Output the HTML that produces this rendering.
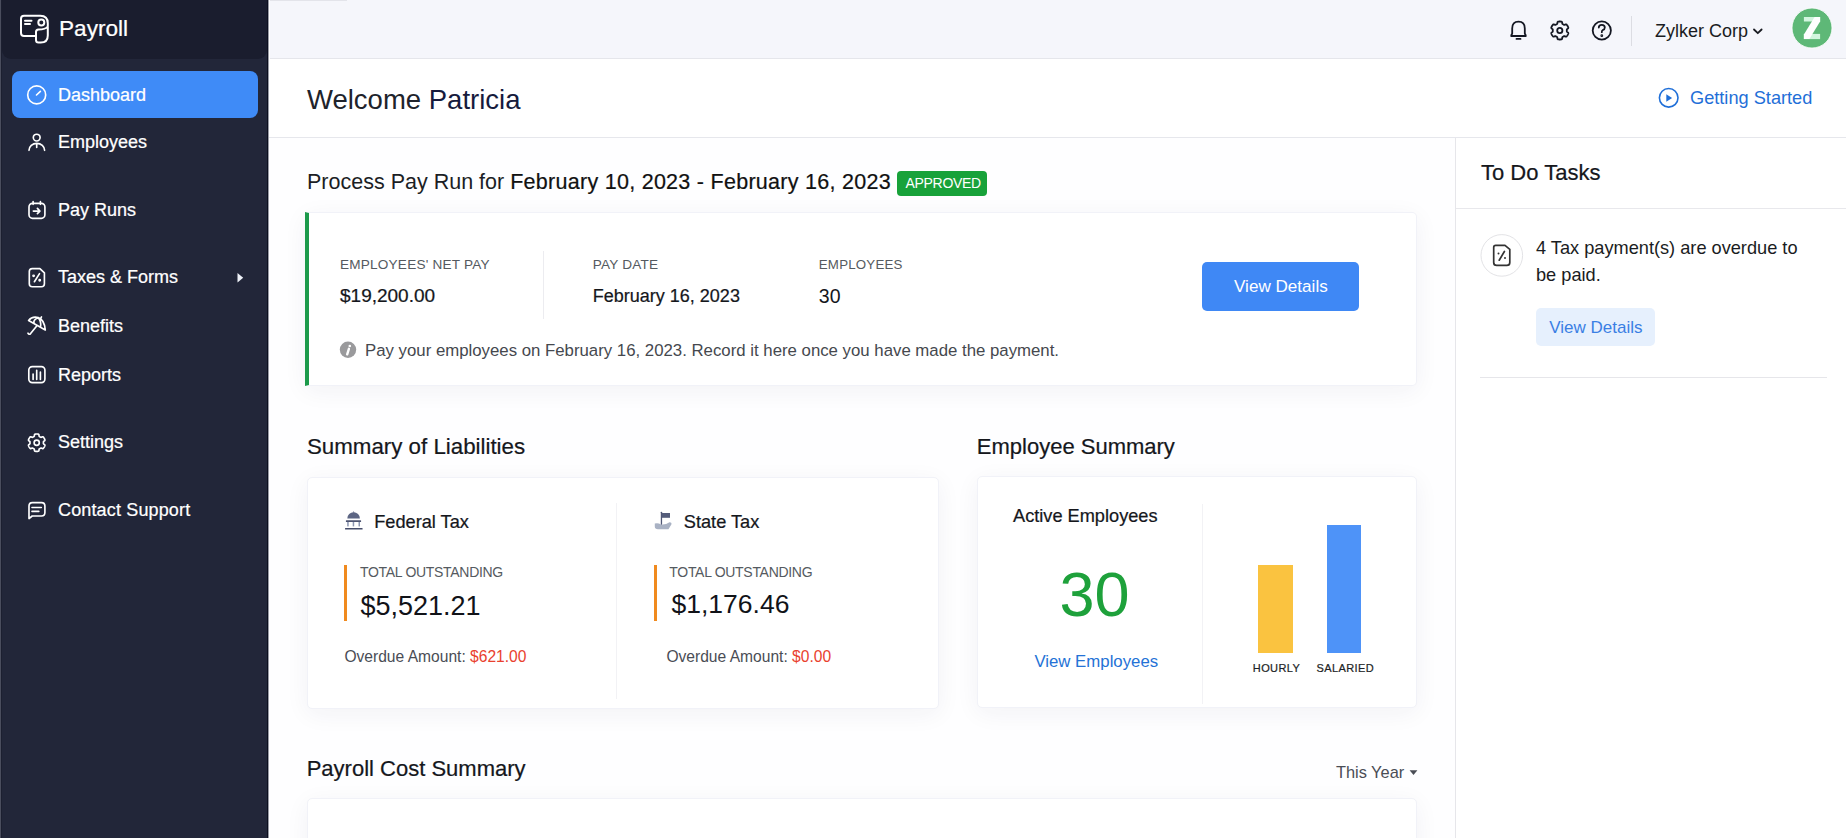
<!DOCTYPE html>
<html><head><meta charset="utf-8"><title>Payroll Dashboard</title>
<style>
*{box-sizing:border-box;margin:0;padding:0}
html,body{width:1846px;height:838px;overflow:hidden;background:#fff;font-family:"Liberation Sans",sans-serif;color:#21232b}
.abs{position:absolute}
.ic{position:absolute;overflow:visible}
.t{position:absolute;white-space:nowrap;line-height:1}
.med{-webkit-text-stroke:0.22px currentColor}
#sb{position:absolute;left:0;top:0;width:268px;height:838px;background:#222639;border-right:1px solid #0c0f1f}
#sbline{position:absolute;left:268px;top:0;width:1px;height:838px;background:#9a9ca6}
#sb .edge{position:absolute;left:0;top:0;width:2px;height:838px;background:#1c1f30;border-left:1px solid #4a4d5d}
#logo{position:absolute;left:2px;top:0;width:265px;height:58.5px;background:#1a1d2e;border-radius:0 0 9px 9px}
.nav{position:absolute;left:12px;width:246px;height:47px;border-radius:8px}
.nav.act{background:#3f8bf7}
#hdr{position:absolute;left:270px;top:0;width:1576px;height:59px;background:#f5f6fb;border-bottom:1px solid #e5e6eb}
#topbar{position:absolute;left:270px;top:0;width:77px;height:1px;background:#e3e4ea}
#welc{position:absolute;left:269px;top:59px;width:1577px;height:79px;background:#fff;border-bottom:1px solid #e6e7ec}
#main{position:absolute;left:269px;top:138px;width:1186px;height:700px;background:#fefeff}
#right{position:absolute;left:1455px;top:138px;width:391px;height:700px;background:#fff;border-left:1px solid #e6e6ea}
.card{position:absolute;background:#fff;border-radius:5px;box-shadow:0 5px 24px rgba(30,35,70,0.055);border:1px solid #f1f2f8}
</style></head><body>
<div id="sb"><div class="edge"></div><div id="logo"></div><div class="nav act" style="top:71px"></div></div><div id="sbline"></div><svg class="ic" style="left:14px;top:8px" width="42" height="42" viewBox="0 0 42 42" fill="none" stroke="#fff" stroke-width="2" stroke-linecap="round" stroke-linejoin="round">
<path d="M22 28 H10 Q7 28 7 25 V10.8 Q7 7.8 10 7.8 H26.3 Q33.8 7.8 33.8 15.3 V27.6 Q33.8 34.6 26.8 34.6 H24.5 Q22 34.6 22 32.1 V24 Q22 21.5 24.5 21.5 Q31.5 21.5 33.8 18.5"/>
<circle cx="27.3" cy="14.5" r="3"/><path d="M11 12.8 H17.5 M11 16 H16"/></svg>
<div class="t med" style="left:59px;top:18.07px;font-size:22.6px;color:white;letter-spacing:0px">Payroll</div>
<div class="t med" style="left:58px;top:86.16px;font-size:18px;color:white;">Dashboard</div>
<div class="t med" style="left:58px;top:133.16px;font-size:18px;color:white;">Employees</div>
<div class="t med" style="left:58px;top:201.16px;font-size:18px;color:white;">Pay Runs</div>
<div class="t med" style="left:58px;top:268.16px;font-size:18px;color:white;">Taxes &amp; Forms</div>
<div class="t med" style="left:58px;top:317.16px;font-size:18px;color:white;">Benefits</div>
<div class="t med" style="left:58px;top:365.66px;font-size:18px;color:white;">Reports</div>
<div class="t med" style="left:58px;top:432.86px;font-size:18px;color:white;">Settings</div>
<div class="t med" style="left:58px;top:501.06px;font-size:18px;color:white;letter-spacing:0.15px">Contact Support</div>
<svg class="ic" style="left:22px;top:80px" width="30" height="30" viewBox="0 0 30 30" fill="none" stroke="#fff" stroke-width="1.65" stroke-linecap="round" stroke-linejoin="round"><circle cx="14.7" cy="14.9" r="9"/><path d="M14.5 15 L18.4 11.3"/></svg>
<svg class="ic" style="left:22px;top:127px" width="30" height="30" viewBox="0 0 30 30" fill="none" stroke="#fff" stroke-width="1.65" stroke-linecap="round" stroke-linejoin="round"><circle cx="14.7" cy="10.6" r="3.4"/><path d="M7 23.3 A7.8 7 0 0 1 22.6 23.3 M14.7 16.8 V20.4"/></svg>
<svg class="ic" style="left:22px;top:195px" width="30" height="30" viewBox="0 0 30 30" fill="none" stroke="#fff" stroke-width="1.65" stroke-linecap="round" stroke-linejoin="round"><rect x="7" y="8.4" width="15.9" height="14.9" rx="3.5"/><path d="M11.1 6.6 V9.3 M18.4 6.6 V9.3 M11.3 16.1 H17.9 M15.4 13.4 L17.9 16.1 L15.4 18.6"/></svg>
<svg class="ic" style="left:22px;top:262px" width="30" height="30" viewBox="0 0 30 30" fill="none" stroke="#fff" stroke-width="1.65" stroke-linecap="round" stroke-linejoin="round"><path d="M10.3 6.6 H17.9 L22.4 10.9 V21.7 Q22.4 24.7 19.4 24.7 H10.3 Q7.3 24.7 7.3 21.7 V9.6 Q7.3 6.6 10.3 6.6 Z M12.4 19.7 L17.5 11.6"/><circle cx="11.6" cy="13.8" r="0.6" fill="#fff"/><circle cx="17.7" cy="18.3" r="0.6" fill="#fff"/></svg>
<svg class="ic" style="left:22px;top:311px" width="30" height="30" viewBox="0 0 30 30" fill="none" stroke="#fff" stroke-width="1.65" stroke-linecap="round" stroke-linejoin="round"><path d="M6.6 9.5 Q10 5 16.3 6.6 Q22.5 8.8 23.3 19 Z M16.3 6.8 Q11.5 8.5 11.8 12 M16.3 6.8 Q19.5 11 18.6 15.8 M19.5 5.9 L18.7 7.4 M14.7 15 L8.6 22.6 Q7.2 24 6 22.2"/></svg>
<svg class="ic" style="left:22px;top:360px" width="30" height="30" viewBox="0 0 30 30" fill="none" stroke="#fff" stroke-width="1.65" stroke-linecap="round" stroke-linejoin="round"><rect x="6.8" y="6.6" width="16.1" height="16" rx="3.5"/><path d="M11.1 14.1 V19.5 M14.7 10.2 V19.5 M18.4 12 V19.5"/></svg>
<svg class="ic" style="left:22px;top:428px" width="30" height="30" viewBox="0 0 30 30" fill="none" stroke="#fff" stroke-width="1.65" stroke-linecap="round" stroke-linejoin="round"><path d="M14.70 6.00 L15.00 6.01 L15.31 6.02 L15.61 6.05 L15.91 6.09 L16.21 6.14 L16.50 6.23 L16.77 6.41 L16.95 6.85 L17.02 7.57 L17.09 8.13 L17.25 8.39 L17.44 8.54 L17.65 8.66 L17.85 8.77 L18.06 8.89 L18.26 9.01 L18.46 9.13 L18.66 9.25 L18.89 9.34 L19.20 9.34 L19.72 9.13 L20.37 8.82 L20.85 8.76 L21.14 8.90 L21.36 9.11 L21.55 9.35 L21.74 9.59 L21.91 9.84 L22.08 10.09 L22.23 10.35 L22.38 10.62 L22.52 10.89 L22.65 11.16 L22.76 11.44 L22.87 11.73 L22.94 12.02 L22.91 12.34 L22.63 12.72 L22.03 13.14 L21.59 13.49 L21.43 13.75 L21.40 14.00 L21.40 14.23 L21.41 14.47 L21.41 14.70 L21.41 14.93 L21.40 15.17 L21.40 15.40 L21.43 15.65 L21.59 15.91 L22.03 16.26 L22.63 16.68 L22.91 17.06 L22.94 17.38 L22.87 17.67 L22.76 17.96 L22.65 18.24 L22.52 18.51 L22.38 18.78 L22.23 19.05 L22.08 19.31 L21.91 19.56 L21.74 19.81 L21.55 20.05 L21.36 20.29 L21.14 20.50 L20.85 20.64 L20.37 20.58 L19.72 20.27 L19.20 20.06 L18.89 20.06 L18.66 20.15 L18.46 20.27 L18.26 20.39 L18.06 20.51 L17.85 20.63 L17.65 20.74 L17.44 20.86 L17.25 21.01 L17.09 21.27 L17.02 21.83 L16.95 22.55 L16.77 22.99 L16.50 23.17 L16.21 23.26 L15.91 23.31 L15.61 23.35 L15.31 23.38 L15.00 23.39 L14.70 23.40 L14.40 23.39 L14.09 23.38 L13.79 23.35 L13.49 23.31 L13.19 23.26 L12.90 23.17 L12.63 22.99 L12.45 22.55 L12.38 21.83 L12.31 21.27 L12.15 21.01 L11.96 20.86 L11.75 20.74 L11.55 20.63 L11.34 20.51 L11.14 20.39 L10.94 20.27 L10.74 20.15 L10.51 20.06 L10.20 20.06 L9.68 20.27 L9.03 20.58 L8.55 20.64 L8.26 20.50 L8.04 20.29 L7.85 20.05 L7.66 19.81 L7.49 19.56 L7.32 19.31 L7.17 19.05 L7.02 18.78 L6.88 18.51 L6.75 18.24 L6.64 17.96 L6.53 17.67 L6.46 17.38 L6.49 17.06 L6.77 16.68 L7.37 16.26 L7.81 15.91 L7.97 15.65 L8.00 15.40 L8.00 15.17 L7.99 14.93 L7.99 14.70 L7.99 14.47 L8.00 14.23 L8.00 14.00 L7.97 13.75 L7.81 13.49 L7.37 13.14 L6.77 12.72 L6.49 12.34 L6.46 12.02 L6.53 11.73 L6.64 11.44 L6.75 11.16 L6.88 10.89 L7.02 10.62 L7.17 10.35 L7.32 10.09 L7.49 9.84 L7.66 9.59 L7.85 9.35 L8.04 9.11 L8.26 8.90 L8.55 8.76 L9.03 8.82 L9.68 9.13 L10.20 9.34 L10.51 9.34 L10.74 9.25 L10.94 9.13 L11.14 9.01 L11.34 8.89 L11.55 8.77 L11.75 8.66 L11.96 8.54 L12.15 8.39 L12.31 8.13 L12.38 7.57 L12.45 6.85 L12.63 6.41 L12.90 6.23 L13.19 6.14 L13.49 6.09 L13.79 6.05 L14.09 6.02 L14.40 6.01 Z"/><circle cx="14.7" cy="14.7" r="2.6"/></svg>
<svg class="ic" style="left:22px;top:496px" width="30" height="30" viewBox="0 0 30 30" fill="none" stroke="#fff" stroke-width="1.65" stroke-linecap="round" stroke-linejoin="round"><path d="M7 22.6 V10 Q7 6.6 10.4 6.6 H19.5 Q22.9 6.6 22.9 10 V16.6 Q22.9 20 19.5 20 H10.2 Z M10 11.5 H19.3 M10 15.4 H16.8"/></svg>
<svg class="ic" style="left:225px;top:265px" width="30" height="25" viewBox="0 0 30 25"><path d="M12.5 8.1 L18.2 12.7 L12.5 17.6 Z" fill="#eef1f8"/></svg>
<div id="hdr"></div><div id="topbar"></div><svg class="ic" style="left:1500px;top:10px" width="120" height="40" viewBox="0 0 120 40" fill="none" stroke="#141722" stroke-width="1.8" stroke-linecap="round" stroke-linejoin="round"><path d="M11.2 26 Q11.2 24.8 12.2 23.6 V18.5 Q12.2 11.7 18.5 11.7 Q24.8 11.7 24.8 18.5 V23.6 Q25.8 24.8 25.8 26 Z"/><path d="M16.5 28.9 H20.5"/><path d="M59.80 11.50 L60.11 11.51 L60.43 11.52 L60.74 11.55 L61.05 11.59 L61.36 11.65 L61.66 11.73 L61.94 11.92 L62.13 12.36 L62.21 13.09 L62.30 13.64 L62.46 13.92 L62.66 14.07 L62.88 14.19 L63.09 14.31 L63.31 14.43 L63.52 14.55 L63.72 14.68 L63.94 14.81 L64.17 14.90 L64.49 14.91 L65.02 14.71 L65.68 14.41 L66.16 14.36 L66.46 14.50 L66.69 14.72 L66.89 14.96 L67.08 15.21 L67.26 15.47 L67.43 15.73 L67.59 16.00 L67.75 16.27 L67.89 16.55 L68.02 16.84 L68.14 17.13 L68.25 17.43 L68.32 17.73 L68.30 18.06 L68.02 18.45 L67.43 18.88 L66.99 19.23 L66.83 19.51 L66.80 19.76 L66.80 20.01 L66.81 20.26 L66.81 20.50 L66.81 20.74 L66.80 20.99 L66.80 21.24 L66.83 21.49 L66.99 21.77 L67.43 22.12 L68.02 22.55 L68.30 22.94 L68.32 23.27 L68.25 23.57 L68.14 23.87 L68.02 24.16 L67.89 24.45 L67.75 24.73 L67.59 25.00 L67.43 25.27 L67.26 25.53 L67.08 25.79 L66.89 26.04 L66.69 26.28 L66.46 26.50 L66.16 26.64 L65.68 26.59 L65.02 26.29 L64.49 26.09 L64.17 26.10 L63.94 26.19 L63.72 26.32 L63.52 26.45 L63.31 26.57 L63.09 26.69 L62.88 26.81 L62.66 26.93 L62.46 27.08 L62.30 27.36 L62.21 27.91 L62.13 28.64 L61.94 29.08 L61.66 29.27 L61.36 29.35 L61.05 29.41 L60.74 29.45 L60.43 29.48 L60.11 29.49 L59.80 29.50 L59.49 29.49 L59.17 29.48 L58.86 29.45 L58.55 29.41 L58.24 29.35 L57.94 29.27 L57.66 29.08 L57.47 28.64 L57.39 27.91 L57.30 27.36 L57.14 27.08 L56.94 26.93 L56.72 26.81 L56.51 26.69 L56.29 26.57 L56.08 26.45 L55.88 26.32 L55.66 26.19 L55.43 26.10 L55.11 26.09 L54.58 26.29 L53.92 26.59 L53.44 26.64 L53.14 26.50 L52.91 26.28 L52.71 26.04 L52.52 25.79 L52.34 25.53 L52.17 25.27 L52.01 25.00 L51.85 24.73 L51.71 24.45 L51.58 24.16 L51.46 23.87 L51.35 23.57 L51.28 23.27 L51.30 22.94 L51.58 22.55 L52.17 22.12 L52.61 21.77 L52.77 21.49 L52.80 21.24 L52.80 20.99 L52.79 20.74 L52.79 20.50 L52.79 20.26 L52.80 20.01 L52.80 19.76 L52.77 19.51 L52.61 19.23 L52.17 18.88 L51.58 18.45 L51.30 18.06 L51.28 17.73 L51.35 17.43 L51.46 17.13 L51.58 16.84 L51.71 16.55 L51.85 16.27 L52.01 16.00 L52.17 15.73 L52.34 15.47 L52.52 15.21 L52.71 14.96 L52.91 14.72 L53.14 14.50 L53.44 14.36 L53.92 14.41 L54.58 14.71 L55.11 14.91 L55.43 14.90 L55.66 14.81 L55.88 14.68 L56.08 14.55 L56.29 14.43 L56.51 14.31 L56.72 14.19 L56.94 14.07 L57.14 13.92 L57.30 13.64 L57.39 13.09 L57.47 12.36 L57.66 11.92 L57.94 11.73 L58.24 11.65 L58.55 11.59 L58.86 11.55 L59.17 11.52 L59.49 11.51 Z"/><circle cx="59.8" cy="20.5" r="2.6"/><circle cx="101.8" cy="20.5" r="9.1"/><path d="M98.8 17.6 Q98.8 14.8 101.8 14.8 Q104.8 14.8 104.8 17.4 Q104.8 19.3 102.6 20.2 Q101.8 20.6 101.8 22.2"/><circle cx="101.8" cy="25.7" r="0.5" fill="#141722"/></svg>
<div class="abs" style="left:1631px;top:16px;width:1px;height:30px;background:#dcdde3"></div><div class="t " style="left:1655px;top:22.26px;font-size:18px;color:#1a1c22;">Zylker Corp</div>
<svg class="ic" style="left:1750px;top:24px" width="16" height="16" viewBox="0 0 16 16"><path d="M4 5.5 L7.8 9.2 L11.6 5.5" fill="none" stroke="#1a1c22" stroke-width="1.8" stroke-linecap="round" stroke-linejoin="round"/></svg>
<svg class="ic" style="left:1790px;top:6px" width="44" height="44" viewBox="0 0 44 44"><circle cx="22" cy="22" r="20" fill="#5eb877" stroke="#fff" stroke-width="0.8"/><rect x="13.9" y="11" width="16.2" height="4.5" fill="#d3f6df"/><rect x="13.9" y="27.9" width="16.2" height="5.2" fill="#d3f6df"/><path d="M24.6 11 H30.1 V15.5 L19.4 33.1 H13.9 V28.6 Z" fill="#fff"/></svg>
<div id="welc"></div><div class="t " style="left:307px;top:85.72px;font-size:27.5px;color:#20232b;">Welcome <span style="color:#161b3d">Patricia</span></div>
<svg class="ic" style="left:1650px;top:80px" width="40" height="36" viewBox="0 0 40 36"><circle cx="18.7" cy="17.8" r="9.3" fill="none" stroke="#1f6fd8" stroke-width="1.6"/><path d="M16.3 14.2 L22.1 18 L16.3 21.7 Z" fill="#1f6fd8"/></svg>
<div class="t " style="left:1690px;top:89.09px;font-size:18.2px;color:#1f6fd8;">Getting Started</div>
<div id="main"></div><div id="right"></div><div class="t " style="left:307px;top:171.80px;font-size:21.5px;color:#1c1e25;">Process Pay Run for <span class="med" style="color:#111;letter-spacing:0.28px">February 10, 2023 - February 16, 2023</span></div>
<div class="abs" style="left:897px;top:171px;width:90px;height:25px;background:#18a23a;border-radius:4px"></div><div class="t " style="left:905.5px;top:176.45px;font-size:14px;color:white;letter-spacing:-0.3px">APPROVED</div>
<div class="card" style="left:305px;top:212px;width:1112px;height:174px;border-left:4px solid #1c9a4b;border-radius:0 5px 5px 0"></div><div class="t " style="left:340px;top:257.69px;font-size:13.6px;color:#555a60;letter-spacing:0.2px">EMPLOYEES' NET PAY</div>
<div class="t " style="left:592.8px;top:257.69px;font-size:13.6px;color:#555a60;letter-spacing:0.2px">PAY DATE</div>
<div class="t " style="left:818.8px;top:257.94px;font-size:13.3px;color:#555a60;letter-spacing:0.2px">EMPLOYEES</div>
<div class="t med" style="left:340px;top:285.92px;font-size:19px;color:#15171c;">$19,200.00</div>
<div class="t med" style="left:592.8px;top:286.76px;font-size:18px;color:#15171c;">February 16, 2023</div>
<div class="t " style="left:818.8px;top:286.79px;font-size:19.5px;color:#15171c;">30</div>
<div class="abs" style="left:543px;top:251px;width:1px;height:68px;background:#ececf0"></div><svg class="ic" style="left:336px;top:338px" width="26" height="24" viewBox="0 0 26 24"><circle cx="12" cy="11.7" r="8.2" fill="#9a9a9c"/><circle cx="13.8" cy="8" r="1.3" fill="#fff"/><path d="M12.9 10.8 L11.2 16.3" stroke="#fff" stroke-width="2.4" stroke-linecap="round"/></svg>
<div class="t " style="left:365px;top:343.08px;font-size:16.8px;color:#45484e;">Pay your employees on February 16, 2023. Record it here once you have made the payment.</div>
<div class="abs" style="left:1202px;top:262px;width:157px;height:49px;background:#3f88f5;border-radius:5px"></div><div class="t " style="left:1234px;top:278.22px;font-size:17.1px;color:white;">View Details</div>
<div class="abs" style="left:1456px;top:208px;width:390px;height:1px;background:#e8e8ec"></div><div class="t med" style="left:1481px;top:162.38px;font-size:22px;color:#15171c;">To Do Tasks</div>
<svg class="ic" style="left:1476px;top:228px" width="52" height="54" viewBox="0 0 52 54"><circle cx="25.8" cy="27.4" r="20.8" fill="#fff" stroke="#e3e3e6" stroke-width="1"/><path d="M19.7 17.4 H29 L33.8 21.3 V34.4 Q33.8 37.4 30.8 37.4 H20.7 Q17.7 37.4 17.7 34.4 V19.4 Q17.7 17.4 19.7 17.4 Z M23.2 32.2 L28.4 23.5" fill="none" stroke="#333" stroke-width="1.7" stroke-linejoin="round" stroke-linecap="round"/><circle cx="22.5" cy="25.5" r="1" fill="#333"/><circle cx="29" cy="30" r="1" fill="#333"/></svg>
<div class="t " style="left:1536px;top:238.59px;font-size:18.2px;color:#1a1c22;">4 Tax payment(s) are overdue to</div>
<div class="t " style="left:1536px;top:266.09px;font-size:18.2px;color:#1a1c22;">be paid.</div>
<div class="abs" style="left:1536px;top:308px;width:119px;height:38px;background:#e6f0fd;border-radius:5px"></div><div class="t " style="left:1549.3px;top:319.11px;font-size:17px;color:#3a7fe4;">View Details</div>
<div class="abs" style="left:1480px;top:377px;width:347px;height:1px;background:#e6e6ea"></div><div class="t med" style="left:307px;top:436.12px;font-size:22.3px;color:#15171c;">Summary of Liabilities</div>
<div class="card" style="left:307px;top:477px;width:632px;height:232px"></div><svg class="ic" style="left:340px;top:506px" width="30" height="30" viewBox="0 0 30 30"><path d="M7.3 12.5 A6.3 6.3 0 0 1 19.9 12.5 Z" fill="#5d6684"/><path d="M13.6 5.2 L14.6 6.6 H12.6 Z" fill="#5d6684"/><rect x="5.9" y="14.2" width="15.2" height="1.7" rx="0.5" fill="#4d5472"/><rect x="7.2" y="16" width="1.5" height="4.4" fill="#8d97b2"/><rect x="12.7" y="16" width="1.5" height="4.4" fill="#8d97b2"/><rect x="18.5" y="16" width="1.5" height="4.4" fill="#8d97b2"/><rect x="5" y="21.9" width="17.6" height="1.5" rx="0.5" fill="#454c6a"/></svg>
<div class="t med" style="left:374.2px;top:512.79px;font-size:18.2px;color:#15171c;">Federal Tax</div>
<div class="abs" style="left:616px;top:503px;width:1px;height:196px;background:#f2f2f5"></div><div class="abs" style="left:344px;top:565px;width:2.5px;height:56px;background:#f08a1e"></div><div class="t " style="left:360px;top:565.15px;font-size:14px;color:#555a60;letter-spacing:-0.3px">TOTAL OUTSTANDING</div>
<div class="t " style="left:360.5px;top:593.14px;font-size:27px;color:#111318;">$5,521.21</div>
<div class="t " style="left:344.4px;top:649.29px;font-size:15.6px;color:#4a4d55;">Overdue Amount: <span style="color:#e9412e">$621.00</span></div>
<svg class="ic" style="left:648px;top:506px" width="30" height="30" viewBox="0 0 30 30"><path d="M6.8 17.6 Q10 16.8 13 18.4 Q17.5 19 21.5 16.2 Q23.6 16 23.6 18 L20.5 23.3 H10 Q6.8 23.3 6.8 20.5 Z" fill="#a9b2c4"/><rect x="12.8" y="5.7" width="1.3" height="13" rx="0.6" fill="#4e5675"/><rect x="13.8" y="7" width="8.2" height="4.8" fill="#545c7a"/></svg>
<div class="t med" style="left:683.8px;top:512.79px;font-size:18.2px;color:#15171c;">State Tax</div>
<div class="abs" style="left:654px;top:565px;width:2.5px;height:56px;background:#f08a1e"></div><div class="t " style="left:669.3px;top:565.15px;font-size:14px;color:#555a60;letter-spacing:-0.3px">TOTAL OUTSTANDING</div>
<div class="t " style="left:671.5px;top:591.07px;font-size:26.5px;color:#111318;">$1,176.46</div>
<div class="t " style="left:666.4px;top:649.29px;font-size:15.6px;color:#4a4d55;">Overdue Amount: <span style="color:#e9412e">$0.00</span></div>
<div class="t med" style="left:976.8px;top:436.38px;font-size:22px;color:#15171c;">Employee Summary</div>
<div class="card" style="left:977px;top:476px;width:440px;height:232px"></div><div class="t med" style="left:1013px;top:506.59px;font-size:18.2px;color:#15171c;">Active Employees</div>
<div class="t " style="left:1059.5px;top:562.67px;font-size:63px;color:#1ea13b;">30</div>
<div class="t " style="left:1034.4px;top:653.78px;font-size:16.8px;color:#2472d6;">View Employees</div>
<div class="abs" style="left:1202px;top:504px;width:1px;height:200px;background:#f2f2f5"></div><div class="abs" style="left:1258px;top:565px;width:35px;height:88px;background:#fac340"></div><div class="abs" style="left:1327px;top:524.5px;width:34px;height:128px;background:#4e93f8"></div><div class="t med" style="left:1252.8px;top:662.89px;font-size:11px;color:#1d1f26;letter-spacing:0.4px">HOURLY</div>
<div class="t med" style="left:1316.5px;top:662.89px;font-size:11px;color:#1d1f26;letter-spacing:0.4px">SALARIED</div>
<div class="t med" style="left:306.7px;top:758.18px;font-size:22px;color:#15171c;">Payroll Cost Summary</div>
<div class="t " style="left:1335.9px;top:764.12px;font-size:16.4px;color:#4a4d55;">This Year</div>
<svg class="ic" style="left:1405px;top:765px" width="16" height="14" viewBox="0 0 16 14"><path d="M4.6 5.2 H12.4 L8.5 9.9 Z" fill="#4a4d55"/></svg>
<div class="card" style="left:307px;top:798px;width:1110px;height:80px"></div></body></html>
